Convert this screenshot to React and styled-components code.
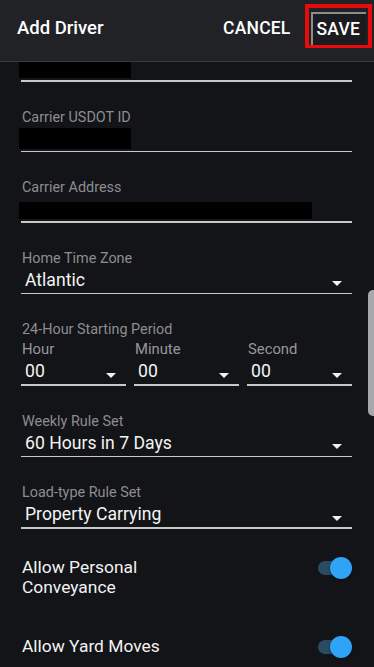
import React from "react";
import styled, { createGlobalStyle } from "styled-components";

const Global = createGlobalStyle`
  html, body {
    margin: 0;
    padding: 0;
    background: #131417;
  }
  body {
    font-family: Roboto, "Liberation Sans", sans-serif;
  }
`;

const Screen = styled.div`
  position: relative;
  width: 374px;
  height: 667px;
  overflow: hidden;
  background: #131417;
`;

const Header = styled.header`
  display: flex;
  align-items: center;
  height: 62px;
  padding: 0 2px 5px 17px;
  background: #202225;
  border-bottom: 1px solid #393a3e;
  box-sizing: border-box;
`;

const Title = styled.h1`
  margin: 0;
  font-size: 18.5px;
  font-weight: 500;
  color: #ffffff;
`;

const Actions = styled.div`
  display: flex;
  align-items: center;
  margin-left: auto;
`;

const TextButton = styled.button`
  background: none;
  border: none;
  padding: 0;
  font-family: inherit;
  font-size: 17.5px;
  font-weight: 500;
  color: #ffffff;
  letter-spacing: 0.2px;
`;

const Highlight = styled.div`
  display: flex;
  margin: -4px 0 0 14px;
  padding: 4px 2px 0 2px;
  height: 44px;
  box-sizing: border-box;
  border: 4px solid #ea0a0a;
  border-bottom-width: 3px;
`;

const SaveButton = styled(TextButton)`
  flex: 1;
  padding: 0 6px 2px 4px;
  background: #1b1c1f;
  border-top: 2px solid #8d8d8d;
  border-left: 2px solid #8d8d8d;
`;

const Form = styled.div`
  display: flex;
  flex-direction: column;
  padding: 0 22px 0 21px;
`;

const Field = styled.div`
  display: flex;
  flex-direction: column;
  margin-top: ${(p) => (p.$first ? "0" : "27px")};
  min-width: 0;
  flex: 1;
`;

const Label = styled.div`
  font-size: 14.4px;
  line-height: 17px;
  color: #8c8d91;
  padding-left: 1px;
`;

const SubLabel = styled(Label)`
  margin-top: 3px;
  font-size: 14.8px;
  color: #97989c;
`;

const Redacted = styled.div`
  width: ${(p) => p.$w}px;
  height: ${(p) => p.$h}px;
  margin-top: ${(p) => p.$top || 0}px;
  margin-left: -2px;
  background: #000;
`;

const Line = styled.div`
  height: 1.5px;
  margin-top: 2px;
  background: #c9c9c9;
`;

const Select = styled.div`
  display: flex;
  align-items: center;
  height: 22px;
  margin-top: 2px;
  padding: 0 10px 0 4px;
  font-size: 17.6px;
  color: #f4f4f4;
`;

const Value = styled.span`
  flex: 1;
`;

const Caret = styled.span`
  width: 0;
  height: 0;
  margin-top: 8px;
  border-left: 5px solid transparent;
  border-right: 5px solid transparent;
  border-top: 5px solid #f0f0f0;
`;

const TimeRow = styled.div`
  display: flex;
  gap: 8px;
`;

const ToggleRow = styled.div`
  display: flex;
  align-items: flex-start;
  justify-content: space-between;
  margin-top: ${(p) => p.$top}px;
`;

const ToggleText = styled.div`
  font-size: 17.4px;
  line-height: 20px;
  color: #f2f2f2;
  padding-left: 1px;
`;

const Toggle = styled.div`
  position: relative;
  width: 34px;
  height: 22px;
  flex-shrink: 0;
  &::before {
    content: "";
    position: absolute;
    left: 0;
    top: 4px;
    width: 30px;
    height: 14px;
    border-radius: 7px;
    background: #2b4a63;
  }
  &::after {
    content: "";
    position: absolute;
    right: 0;
    top: 0;
    width: 22px;
    height: 22px;
    border-radius: 50%;
    background: #2fa3f6;
    box-shadow: 0 1px 2px rgba(0, 0, 0, 0.5);
  }
`;

const ScrollThumb = styled.div`
  position: absolute;
  right: 0;
  top: 290px;
  width: 6px;
  height: 126px;
  border-radius: 5px 0 0 5px;
  background: #a7a8ab;
`;

const SelectField = ({ label, value, sub }) => (
  <Field $first={sub}>
    {sub ? <SubLabel>{label}</SubLabel> : <Label>{label}</Label>}
    <Select>
      <Value>{value}</Value>
      <Caret />
    </Select>
    <Line />
  </Field>
);

const App = () => {
  return (
    <Screen>
      <Global />
      <Header>
        <Title>Add Driver</Title>
        <Actions>
          <TextButton>CANCEL</TextButton>
          <Highlight>
            <SaveButton>SAVE</SaveButton>
          </Highlight>
        </Actions>
      </Header>
      <Form>
        <Field $first>
          <Redacted $w={112} $h={16} />
          <Line />
        </Field>
        <Field>
          <Label>Carrier USDOT ID</Label>
          <Redacted $w={112} $h={21} $top={2} />
          <Line />
        </Field>
        <Field>
          <Label>Carrier Address</Label>
          <Redacted $w={293} $h={17} $top={6} />
          <Line />
        </Field>
        <SelectField label="Home Time Zone" value="Atlantic" />
        <Field>
          <Label>24-Hour Starting Period</Label>
          <TimeRow>
            <SelectField sub label="Hour" value="00" />
            <SelectField sub label="Minute" value="00" />
            <SelectField sub label="Second" value="00" />
          </TimeRow>
        </Field>
        <SelectField label="Weekly Rule Set" value="60 Hours in 7 Days" />
        <SelectField label="Load-type Rule Set" value="Property Carrying" />
        <ToggleRow $top={28}>
          <ToggleText>
            Allow Personal
            <br />
            Conveyance
          </ToggleText>
          <Toggle />
        </ToggleRow>
        <ToggleRow $top={39}>
          <ToggleText>Allow Yard Moves</ToggleText>
          <Toggle />
        </ToggleRow>
      </Form>
      <ScrollThumb />
    </Screen>
  );
};

export default App;
